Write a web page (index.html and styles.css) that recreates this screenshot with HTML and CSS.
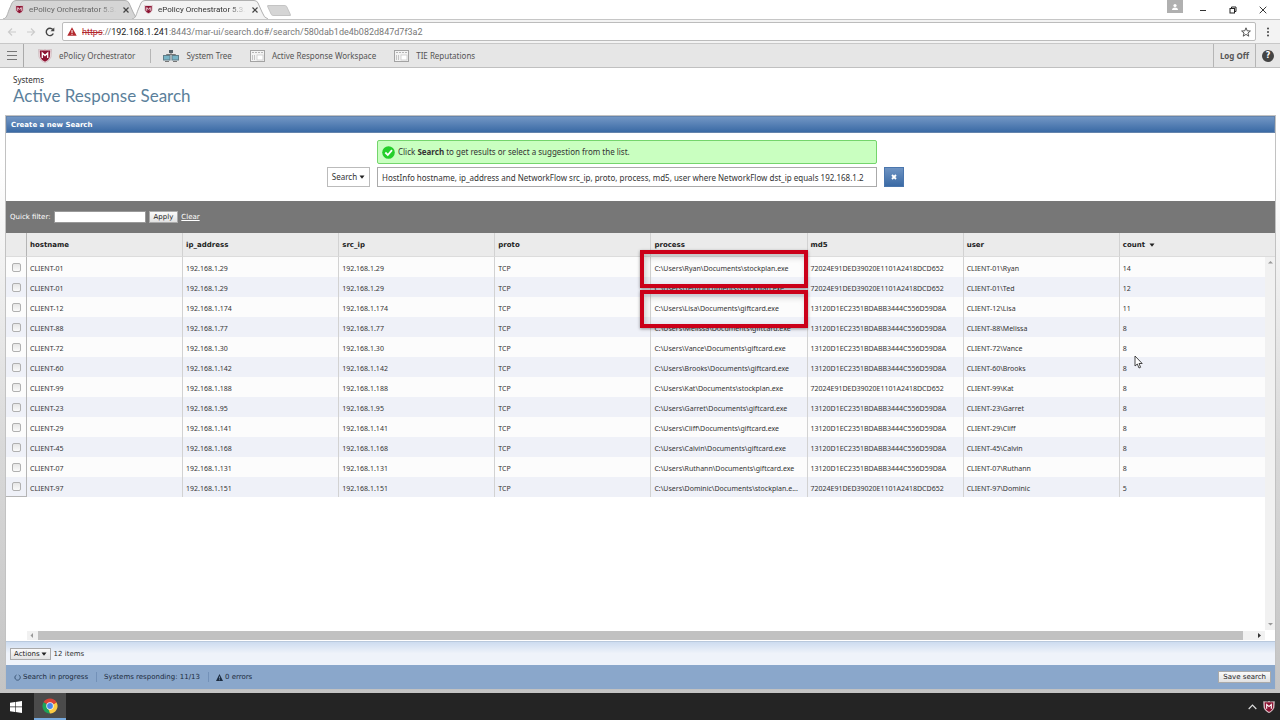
FILE: index.html
```
<!DOCTYPE html>
<html lang="en">

<head>
    <meta charset="utf-8" />
    <title>ePolicy Orchestrator 5.3</title>
    <link rel="stylesheet" href="styles.css">
</head>

<body>
    <svg class="defs" aria-hidden="true">
        <symbol id="shield" viewBox="0 0 14 14">
            <path d="M7 0 L8.5 1 L13.5 .5 L13 8 Q12 11.500 7 14 Q2 11.500 1 8 L.5 .5 L5.500 1 Z" fill="#f2dfe3" stroke="#b9a0a6" stroke-width=".5" />
            <path d="M1.800 1.500 H12.200 L11.800 8 Q11 10.800 7 12.800 Q3 10.800 2.200 8 Z" fill="#8c1433" />
            <path d="M4.300 9 V4 L7 6.500 L9.700 4 V9" fill="none" stroke="#fff" stroke-width="1.300" />
        </symbol>
        <symbol id="window" viewBox="0 0 15 12">
            <rect x=".5" y=".5" width="14" height="11" fill="#f3f3f3" stroke="#a3a3a3" />
            <path d="M2 2.500 H13" stroke="#b5b5b5" stroke-dasharray="2 1" />
            <path d="M2.500 5 V10 M4.500 5 V10" stroke="#c4c4c4" />
            <rect x="7" y="5" width="6" height="5" fill="#fff" stroke="#c4c4c4" stroke-width=".7" />
        </symbol>
        <symbol id="close" viewBox="0 0 8 8">
            <path d="M1.500 1.500 L6.500 6.500 M6.500 1.500 L1.500 6.500" stroke="#444" stroke-width="1.200" />
        </symbol>
        <symbol id="caret" viewBox="0 0 6 4">
            <path d="M.5 .5 H5.500 L3 3.800 Z" fill="#222" />
        </symbol>
    </svg>

    <header class="browser">
        <div class="tabs">
            <div class="tab">
                <svg class="tab-shape" viewBox="0 0 136 19" preserveAspectRatio="none"><path d="M0 19 C4 18 4 15 6 10 L9 3 Q10 .5 13 .5 H122 Q125 .5 126 3 L130 12 Q132 18 136 19" fill="#d5d5d5" stroke="#b0b0b0" /></svg>
                <svg class="tab-icon"><use href="#shield" /></svg>
                <span class="tab-title">ePolicy Orchestrator 5.3.</span>
                <button class="plain" aria-label="Close tab"><svg class="x"><use href="#close" /></svg></button>
            </div>
            <div class="tab active">
                <svg class="tab-shape" viewBox="0 0 136 19" preserveAspectRatio="none"><path d="M0 19 C4 18 4 15 6 10 L9 3 Q10 .5 13 .5 H122 Q125 .5 126 3 L130 12 Q132 18 136 19" fill="#f3f3f3" stroke="#b0b0b0" /></svg>
                <svg class="tab-icon"><use href="#shield" /></svg>
                <span class="tab-title">ePolicy Orchestrator 5.3.</span>
                <button class="plain" aria-label="Close tab"><svg class="x"><use href="#close" /></svg></button>
            </div>
            <button class="new-tab" aria-label="New tab"></button>
            <div class="window-buttons">
                <span class="profile"><svg width="8" height="8" viewBox="0 0 8 8"><circle cx="4" cy="2.500" r="1.600" fill="#fff" /><path d="M1 7 Q1 4.500 4 4.500 Q7 4.500 7 7 Z" fill="#fff" /></svg></span>
                <button class="plain" aria-label="Minimize"><svg width="8" height="8" viewBox="0 0 8 8"><path d="M1 4.500 H7" stroke="#333" /></svg></button>
                <button class="plain" aria-label="Restore"><svg width="8" height="8" viewBox="0 0 8 8"><path d="M2.500 2 V1 H7 V5.500 H6" fill="none" stroke="#222" /><rect x="1" y="2.500" width="4.500" height="4.500" fill="#fff" stroke="#222" /></svg></button>
                <button class="plain" aria-label="Close"><svg width="8" height="8" viewBox="0 0 8 8"><path d="M.7 .7 L7.300 7.300 M7.300 .7 L.7 7.300" stroke="#222" stroke-width=".9" /></svg></button>
            </div>
        </div>
        <div class="address-bar">
            <button class="plain" aria-label="Back"><svg width="10" height="10" viewBox="0 0 10 10"><path d="M9 5 H1.500 M5 1.500 L1.500 5 L5 8.500" fill="none" stroke="#ccc" stroke-width="1.200" /></svg></button>
            <button class="plain" aria-label="Forward"><svg width="10" height="10" viewBox="0 0 10 10"><path d="M1 5 H8.500 M5 1.500 L8.500 5 L5 8.500" fill="none" stroke="#ccc" stroke-width="1.200" /></svg></button>
            <button class="plain" aria-label="Reload"><svg width="10" height="10" viewBox="0 0 10 10"><path d="M8.300 6.500 A3.700 3.700 0 1 1 7.800 2.500" fill="none" stroke="#444" stroke-width="1.400" /><path d="M9.300 .5 V4.300 H5.500 Z" fill="#444" /></svg></button>
            <div class="url">
                <svg width="10" height="9" viewBox="0 0 10 9"><path d="M5 .3 L9.700 8.700 H.3 Z" fill="#b3282d" /><path d="M5 3 V6 M5 6.800 V7.900" stroke="#fff" /></svg>
                <span class="url-text"><s>https</s>://<b>192.168.1.241</b>:8443/mar-ui/search.do#/search/580dab1de4b082d847d7f3a2</span>
                <svg width="10" height="10" viewBox="0 0 10 10"><path d="M5 .8 L6.200 3.800 L9.400 4 L6.900 6 L7.800 9.200 L5 7.400 L2.200 9.200 L3.100 6 L.6 4 L3.800 3.800 Z" fill="none" stroke="#444" stroke-width=".9" /></svg>
            </div>
            <button class="plain menu-dots" aria-label="Menu"><svg width="4" height="10" viewBox="0 0 4 10"><circle cx="2" cy="1.500" r="1" fill="#444" /><circle cx="2" cy="5" r="1" fill="#444" /><circle cx="2" cy="8.500" r="1" fill="#444" /></svg></button>
        </div>
    </header>

    <nav class="app-bar">
        <button class="hamburger" aria-label="Menu"><svg width="10" height="9" viewBox="0 0 10 9"><path d="M0 .5 H10 M0 4.500 H10 M0 8.500 H10" stroke="#777" /></svg></button>
        <a class="brand" href="#"><svg width="14" height="14"><use href="#shield" /></svg>ePolicy Orchestrator</a>
        <a href="#">
            <svg width="16" height="14" viewBox="0 0 16 14"><path d="M8 3 V6 M3.500 7 V5.500 H12.500 V7" fill="none" stroke="#777" /><rect x="6" y="1" width="4" height="3" fill="#566269" /><rect x=".5" y="6.500" width="6.500" height="4.500" fill="#78b4c6" stroke="#5f7d88" /><rect x="9" y="6.500" width="6.500" height="4.500" fill="#78b4c6" stroke="#5f7d88" /><path d="M2 12.500 H6 M10 12.500 H14" stroke="#777" /></svg>
            System Tree</a>
        <a href="#"><svg width="15" height="12"><use href="#window" /></svg>Active Response Workspace</a>
        <a href="#"><svg width="15" height="12"><use href="#window" /></svg>TIE Reputations</a>
        <a class="log-off" href="#">Log Off</a>
        <button class="help" aria-label="Help">?</button>
    </nav>

    <main class="page">
        <div class="crumb">Systems</div>
        <h1>Active Response Search</h1>

        <section class="panel">
            <h2>Create a new Search</h2>
            <form class="search-form">
                <div class="message">
                    <svg width="13" height="13" viewBox="0 0 13 13"><circle cx="6.500" cy="6.500" r="6.300" fill="#25cf2a" /><path d="M3.300 6.500 L5.800 9 L10 4.200" fill="none" stroke="#fff" stroke-width="1.800" /></svg>
                    <span>Click <b>Search</b> to get results or select a suggestion from the list.</span>
                </div>
                <button class="search-button" type="button">Search <svg width="6" height="4"><use href="#caret" /></svg></button>
                <input class="query" type="text" aria-label="Search query" value="HostInfo hostname, ip_address and NetworkFlow src_ip, proto, process, md5, user where NetworkFlow dst_ip equals 192.168.1.2" />
                <button class="cancel" type="button" aria-label="Cancel search"><svg width="8" height="8" viewBox="0 0 8 8"><path d="M2 2 L6 6 M6 2 L2 6" stroke="#fff" stroke-width="1.800" /></svg></button>
            </form>

            <form class="filter">
                <label for="quick">Quick filter:</label>
                <input id="quick" type="text" />
                <button class="small-button" type="button">Apply</button>
                <a href="#">Clear</a>
            </form>

            <div class="results">
                <div class="table-holder">
                    <table>
                        <colgroup>
                            <col class="col-check" />
                            <col class="col-data" span="7" />
                            <col />
                        </colgroup>
                        <thead>
                            <tr>
                                <th></th>
                                <th>hostname</th>
                                <th>ip_address</th>
                                <th>src_ip</th>
                                <th>proto</th>
                                <th>process</th>
                                <th>md5</th>
                                <th>user</th>
                                <th>count <svg class="sort" width="6" height="4"><use href="#caret" /></svg></th>
                            </tr>
                        </thead>
                        <tbody>
                            <tr><td><input type="checkbox" aria-label="Select row" /></td><td>CLIENT-01</td><td>192.168.1.29</td><td>192.168.1.29</td><td>TCP</td><td class="marked"><span>C:\Users\Ryan\Documents\stockplan.exe</span></td><td>72024E91DED39020E1101A2418DCD652</td><td>CLIENT-01\Ryan</td><td>14</td></tr>
                            <tr><td><input type="checkbox" aria-label="Select row" /></td><td>CLIENT-01</td><td>192.168.1.29</td><td>192.168.1.29</td><td>TCP</td><td>C:\Users\Ted\Documents\stockplan.exe</td><td>72024E91DED39020E1101A2418DCD652</td><td>CLIENT-01\Ted</td><td>12</td></tr>
                            <tr><td><input type="checkbox" aria-label="Select row" /></td><td>CLIENT-12</td><td>192.168.1.174</td><td>192.168.1.174</td><td>TCP</td><td class="marked"><span>C:\Users\Lisa\Documents\giftcard.exe</span></td><td>13120D1EC2351BDABB3444C556D59D8A</td><td>CLIENT-12\Lisa</td><td>11</td></tr>
                            <tr><td><input type="checkbox" aria-label="Select row" /></td><td>CLIENT-88</td><td>192.168.1.77</td><td>192.168.1.77</td><td>TCP</td><td>C:\Users\Melissa\Documents\giftcard.exe</td><td>13120D1EC2351BDABB3444C556D59D8A</td><td>CLIENT-88\Melissa</td><td>8</td></tr>
                            <tr><td><input type="checkbox" aria-label="Select row" /></td><td>CLIENT-72</td><td>192.168.1.30</td><td>192.168.1.30</td><td>TCP</td><td>C:\Users\Vance\Documents\giftcard.exe</td><td>13120D1EC2351BDABB3444C556D59D8A</td><td>CLIENT-72\Vance</td><td>8</td></tr>
                            <tr><td><input type="checkbox" aria-label="Select row" /></td><td>CLIENT-60</td><td>192.168.1.142</td><td>192.168.1.142</td><td>TCP</td><td>C:\Users\Brooks\Documents\giftcard.exe</td><td>13120D1EC2351BDABB3444C556D59D8A</td><td>CLIENT-60\Brooks</td><td>8</td></tr>
                            <tr><td><input type="checkbox" aria-label="Select row" /></td><td>CLIENT-99</td><td>192.168.1.188</td><td>192.168.1.188</td><td>TCP</td><td>C:\Users\Kat\Documents\stockplan.exe</td><td>72024E91DED39020E1101A2418DCD652</td><td>CLIENT-99\Kat</td><td>8</td></tr>
                            <tr><td><input type="checkbox" aria-label="Select row" /></td><td>CLIENT-23</td><td>192.168.1.95</td><td>192.168.1.95</td><td>TCP</td><td>C:\Users\Garret\Documents\giftcard.exe</td><td>13120D1EC2351BDABB3444C556D59D8A</td><td>CLIENT-23\Garret</td><td>8</td></tr>
                            <tr><td><input type="checkbox" aria-label="Select row" /></td><td>CLIENT-29</td><td>192.168.1.141</td><td>192.168.1.141</td><td>TCP</td><td>C:\Users\Cliff\Documents\giftcard.exe</td><td>13120D1EC2351BDABB3444C556D59D8A</td><td>CLIENT-29\Cliff</td><td>8</td></tr>
                            <tr><td><input type="checkbox" aria-label="Select row" /></td><td>CLIENT-45</td><td>192.168.1.168</td><td>192.168.1.168</td><td>TCP</td><td>C:\Users\Calvin\Documents\giftcard.exe</td><td>13120D1EC2351BDABB3444C556D59D8A</td><td>CLIENT-45\Calvin</td><td>8</td></tr>
                            <tr><td><input type="checkbox" aria-label="Select row" /></td><td>CLIENT-07</td><td>192.168.1.131</td><td>192.168.1.131</td><td>TCP</td><td>C:\Users\Ruthann\Documents\giftcard.exe</td><td>13120D1EC2351BDABB3444C556D59D8A</td><td>CLIENT-07\Ruthann</td><td>8</td></tr>
                            <tr><td><input type="checkbox" aria-label="Select row" /></td><td>CLIENT-97</td><td>192.168.1.151</td><td>192.168.1.151</td><td>TCP</td><td>C:\Users\Dominic\Documents\stockplan.e...</td><td>72024E91DED39020E1101A2418DCD652</td><td>CLIENT-97\Dominic</td><td>5</td></tr>
                        </tbody>
                    </table>
                    <div class="h-scroll">
                        <svg width="10" height="9" viewBox="0 0 10 9"><path d="M6 2 V7 L3.500 4.500 Z" fill="#999" /></svg>
                        <div class="thumb"></div>
                        <svg width="12" height="9" viewBox="0 0 12 9"><path d="M5 2 V7 L8 4.500 Z" fill="#333" /></svg>
                    </div>
                </div>
                <div class="v-scroll">
                    <div class="v-head"></div>
                    <div class="v-track">
                        <svg width="10" height="10" viewBox="0 0 10 10"><path d="M3 6.500 H8 L5.500 4 Z" fill="#999" /></svg>
                        <svg width="10" height="10" viewBox="0 0 10 10"><path d="M3 3 H8 L5.500 5.500 Z" fill="#999" /></svg>
                    </div>
                    <div class="v-corner"></div>
                </div>
            </div>

            <div class="actions">
                <button class="small-button" type="button">Actions <svg width="6" height="4"><use href="#caret" /></svg></button>
                <span>12 items</span>
            </div>
            <footer class="status">
                <span class="status-item"><svg width="7" height="7" viewBox="0 0 7 7"><path d="M2.500 1 A2.700 2.700 0 1 0 4.700 1" fill="none" stroke="#3d5878" /></svg>Search in progress</span>
                <span class="status-item">Systems responding: 11/13</span>
                <span class="status-item"><svg width="7" height="7" viewBox="0 0 7 7"><path d="M3.500 0 L7 7 H0 Z" fill="#1c2c40" /><path d="M3.500 2.500 V4.500 M3.500 5.300 V6.200" stroke="#8aa7cb" stroke-width=".8" /></svg>0 errors</span>
                <button class="small-button save" type="button">Save search</button>
            </footer>
        </section>
    </main>

    <div class="taskbar">
        <button class="task" aria-label="Start"><svg width="12" height="12" viewBox="0 0 12 12"><path d="M0 1.800 L5 1 V5.600 H0 Z M5.600 .9 L12 0 V5.600 H5.600 Z M0 6.300 H5 V11 L0 10.200 Z M5.600 6.300 H12 V12 L5.600 11.100 Z" fill="#fff" /></svg></button>
        <button class="task running" aria-label="Chrome">
            <svg width="16" height="16" viewBox="0 0 16 16"><path d="M8 8 L1.500 4.250 A7.500 7.500 0 0 1 14.500 4.250 Z" fill="#dc4437" /><path d="M8 8 L1.500 4.250 A7.500 7.500 0 0 0 8 15.500 Z" fill="#1da35a" /><path d="M8 8 L14.500 4.250 A7.500 7.500 0 0 1 8 15.500 Z" fill="#fdcc44" /><path d="M8 4.500 H14.600 L8 8 Z" fill="#dc4437" /><path d="M11 9.800 L8 15.500 L6 10 Z" fill="#fdcc44" /><circle cx="8" cy="8" r="3.700" fill="#f4f4f4" /><circle cx="8" cy="8" r="2.900" fill="#4a86ec" /></svg>
        </button>
        <div class="tray">
            <svg width="9" height="6" viewBox="0 0 9 6"><path d="M.7 5 L4.500 1.200 L8.300 5" fill="none" stroke="#ddd" stroke-width="1.200" /></svg>
            <svg width="12" height="12"><use href="#shield" /></svg>
        </div>
    </div>

    <svg class="pointer" width="9" height="14" viewBox="0 0 9 14"><path d="M1 1 V11 L3.300 9 L5 13 L6.600 12.300 L5 8.500 H8.200 Z" fill="#fff" stroke="#333" stroke-width=".9" /></svg>
</body>

</html>
```
FILE: styles.css
```
*,
*::after {
    box-sizing: border-box;
}

body {
    margin: 0;
    min-height: 100vh;
    display: flex;
    flex-direction: column;
    font: 7px/10px "DejaVu Sans", Verdana, sans-serif;
    color: #333;
    background-color: #fff;
}

svg {
    display: block;
    flex: none;
}

button,
input {
    font: inherit;
    color: inherit;
    margin: 0;
}

a {
    color: inherit;
    text-decoration: none;
}

.defs {
    position: absolute;
    width: 0;
    height: 0;
}

.plain {
    padding: 0;
    border: none;
    background: none;
}

/* browser window */
.browser {
    font-family: Roboto, "Open Sans", sans-serif;
}

.tabs {
    display: flex;
    height: 19px;
    padding-left: 3px;
}

.tab {
    position: relative;
    z-index: 0;
    width: 136px;
    height: 19px;
    margin-right: -7px;
    padding: 0 9px 0 12px;
    display: flex;
    align-items: center;
    gap: 5px;
    color: #666;
    font-size: 8px;
}

.tab.active {
    z-index: 1;
    color: #333;
}

.tab-shape {
    position: absolute;
    left: 0;
    top: 0;
    width: 100%;
    height: 100%;
    z-index: -1;
}

.tab-icon {
    width: 9px;
    height: 9px;
}

.tab-title {
    flex: 1;
    white-space: nowrap;
    -webkit-mask-image: linear-gradient(to right, #000 80%, transparent);
    mask-image: linear-gradient(to right, #000 80%, transparent);
}

.x {
    width: 8px;
    height: 8px;
}

.new-tab {
    width: 20px;
    height: 11px;
    margin: 5px 0 0 8px;
    padding: 0;
    border: 1px solid #c4c4c4;
    border-radius: 2px;
    background-color: #d5d5d5;
    transform: skewX(25deg);
}

.window-buttons {
    margin-left: auto;
    padding-right: 13px;
    display: flex;
    align-items: center;
    gap: 22px;
}

.profile {
    align-self: flex-start;
    width: 16px;
    height: 13px;
    margin-right: -6px;
    display: flex;
    align-items: center;
    justify-content: center;
    background-color: #b0b0b0;
}

.address-bar {
    display: flex;
    align-items: center;
    gap: 9px;
    height: 24px;
    padding: 0 10px 0 7px;
    background-color: #f3f3f3;
    border-top: 1px solid #c6c6c6;
}

.url {
    flex: 1;
    height: 19px;
    margin-left: -2px;
    padding: 0 4px;
    display: flex;
    align-items: center;
    gap: 5px;
    background-color: #fff;
    border: 1px solid #bcbcbc;
    border-radius: 2px;
}

.url-text {
    flex: 1;
    color: #777;
    font-size: 9px;
}

.url-text b {
    font-weight: normal;
    color: #222;
}

.url-text s {
    color: #b3282d;
}

.menu-dots {
    margin-left: 1px;
}

/* product menu */
.app-bar {
    display: flex;
    align-items: center;
    gap: 18px;
    height: 25px;
    background-color: #e6e6e6;
    border-top: 1px solid #c8c8c8;
    border-bottom: 1px solid #c0c0c0;
    color: #555;
    font-size: 8px;
}

.app-bar a {
    display: flex;
    align-items: center;
    gap: 7px;
    font-family: "Noto Sans", Verdana, sans-serif;
}

.app-bar .hamburger {
    align-self: stretch;
    width: 24px;
    margin-right: -4px;
    padding: 0 7px;
    border: none;
    border-right: 1px solid #aaa;
    background: none;
}

.app-bar .brand {
    padding-right: 15px;
    border-right: 1px solid #b5b5b5;
    margin-right: -6px;
}

.app-bar .log-off {
    align-self: stretch;
    margin-left: auto;
    margin-right: -18px;
    padding: 0 6px;
    border: 1px solid #b5b5b5;
    border-width: 0 1px;
    font-weight: bold;
}

.help {
    width: 12px;
    height: 12px;
    margin: 0 6px;
    padding: 0;
    border: none;
    border-radius: 50%;
    background-color: #444;
    color: #fff;
    font-weight: bold;
    line-height: 12px;
}

/* page */
.page {
    flex: 1;
    display: flex;
    flex-direction: column;
    padding: 6px 5px 4px 6px;
    background: linear-gradient(#fff 15%, #d9d9d9 60%, #c4c4c4);
}

.crumb {
    padding-left: 7px;
    font-family: "Noto Sans", Verdana, sans-serif;
    font-size: 8px;
    line-height: 12px;
}

h1 {
    margin: 0 0 11px;
    padding-left: 7px;
    font: 17px/19px Lato, sans-serif;
    color: #5b7f9b;
}

.panel {
    flex: 1;
    display: flex;
    flex-direction: column;
    background-color: #fff;
    box-shadow: 0 0 0 1px #c2c2c2;
}

h2 {
    margin: 0;
    height: 17px;
    padding-left: 4px;
    font-size: 7px;
    line-height: 16px;
    color: #fff;
    background: linear-gradient(#7296c4, #3a6aa5);
    border: 1px solid #6484ad;
}

.search-form {
    display: grid;
    grid-template-columns: 43px minmax(0, 500px) 20px;
    justify-content: center;
    align-content: start;
    gap: 3px 7px;
    height: 68px;
    padding: 7px 50px 0 0;
    color: #333;
    font-family: "Noto Sans", Verdana, sans-serif;
    font-size: 8px;
}

.message {
    grid-column: 2;
    display: flex;
    align-items: center;
    gap: 3px;
    height: 24px;
    padding-left: 4px;
    background-color: #c9ffc0;
    border: 1px solid #74d56c;
    border-radius: 2px;
}

.search-button {
    grid-column: 1;
    display: flex;
    align-items: center;
    justify-content: center;
    gap: 2px;
    height: 20px;
    padding: 0;
    background-color: #fff;
    border: 1px solid #bbb;
}

.query {
    height: 20px;
    padding: 0 4px;
    border: 1px solid #aaa;
    background-color: #fff;
}

.cancel {
    display: flex;
    align-items: center;
    justify-content: center;
    height: 20px;
    padding: 0;
    border: 1px solid #4a76ad;
    background: linear-gradient(#6e93c2, #3a6aa5);
}

.filter {
    display: flex;
    align-items: center;
    gap: 3px;
    height: 32px;
    padding-left: 4px;
    background-color: #777;
    color: #fff;
}

.filter input {
    width: 92px;
    height: 12px;
    border: 1px solid #999;
    background-color: #fff;
    color: #333;
}

.filter a {
    text-decoration: underline;
}

.small-button {
    display: flex;
    align-items: center;
    gap: 2px;
    height: 12px;
    padding: 0 4px;
    border: 1px solid #aaa;
    background: linear-gradient(#fafafa, #e2e2e2);
    color: #222;
}

/* results */
.results {
    flex: 1;
    display: flex;
}

.table-holder {
    flex: 1;
    min-width: 0;
    display: flex;
    flex-direction: column;
}

table {
    width: 100%;
    table-layout: fixed;
    border-collapse: separate;
    border-spacing: 0;
}

.col-check {
    width: 21px;
}

.col-data {
    width: 12.4%;
}

th,
td {
    padding: 0 3px;
    text-align: left;
    white-space: nowrap;
    border-right: 1px solid #d2d2d2;
}

th:first-child,
td:first-child {
    padding: 0 6px;
    border-right-color: #b5b5b5;
}

th:last-child,
td:last-child {
    border-right: none;
}

th {
    height: 24px;
    background-color: #ebebeb;
    border-bottom: 1px solid #dcdcdc;
    color: #222;
}

.sort {
    display: inline-block;
    margin-left: 2px;
    vertical-align: middle;
}

td {
    height: 20px;
    padding-top: 3px;
    font-family: "Noto Sans", Verdana, sans-serif;
}

tbody tr {
    background-color: #fcfcfc;
}

tbody tr:nth-child(even) {
    background-color: #eff1f8;
}

tbody tr:last-child td:first-child {
    border-bottom: 1px solid #b5b5b5;
}

td input {
    display: block;
    appearance: none;
    width: 9px;
    height: 9px;
    border: 1px solid #b0b0b0;
    border-radius: 2px;
    background: linear-gradient(#e6e6e6, #fafafa);
}

/* red frame round a process */
.marked {
    position: relative;
}

.marked::after {
    content: "";
    position: absolute;
    z-index: 1;
    left: -11px;
    right: -1px;
    top: -7px;
    height: 38px;
    border: 4px solid #cb0019;
    box-shadow: 0 1px 3px rgba(0, 0, 0, 0.4), inset 2px 3px 6px rgba(0, 0, 0, 0.2);
    pointer-events: none;
}

.h-scroll {
    display: flex;
    height: 9px;
    margin: auto 0 1px 21px;
    background-color: #f1f1f1;
}

.thumb {
    flex: 1;
    margin: 0 10px 0 1px;
    background-color: #c1c1c1;
}

.v-scroll {
    width: 10px;
    display: flex;
    flex-direction: column;
}

.v-head {
    height: 24px;
    background-color: #ebebeb;
    border-bottom: 1px solid #dcdcdc;
}

.v-track {
    flex: 1;
    display: flex;
    flex-direction: column;
    justify-content: space-between;
    background-color: #f1f1f1;
}

.v-corner {
    height: 11px;
}

.actions {
    display: flex;
    align-items: center;
    gap: 3px;
    height: 24px;
    padding-left: 4px;
    background: linear-gradient(#cddcf0, #eff3fa 50%);
    border-top: 1px solid #b9c9dd;
}

.actions .small-button {
    padding: 0 3px;
    gap: 1px;
}

.status {
    display: flex;
    align-items: center;
    height: 24px;
    padding: 0 4px 0 8px;
    background-color: #8aa7cb;
    color: #1c2c40;
}

.status-item {
    display: flex;
    align-items: center;
    gap: 2px;
}

.status-item + .status-item {
    margin-left: 8px;
    padding-left: 7px;
    border-left: 1px solid #7391b8;
}

.save {
    margin-left: auto;
}

/* windows taskbar */
.taskbar {
    display: flex;
    height: 27px;
    background-color: #242424;
}

.task {
    width: 32px;
    padding: 0;
    display: flex;
    align-items: center;
    justify-content: center;
    border: none;
    background: none;
}

.task:first-child {
    margin-right: 2px;
}

.running {
    background-color: #4b4b4b;
    border-bottom: 2px solid #76a9dd;
}

.tray {
    margin-left: auto;
    padding-right: 5px;
    display: flex;
    align-items: center;
    gap: 6px;
}

.pointer {
    position: absolute;
    left: 1134px;
    top: 355px;
}
```
